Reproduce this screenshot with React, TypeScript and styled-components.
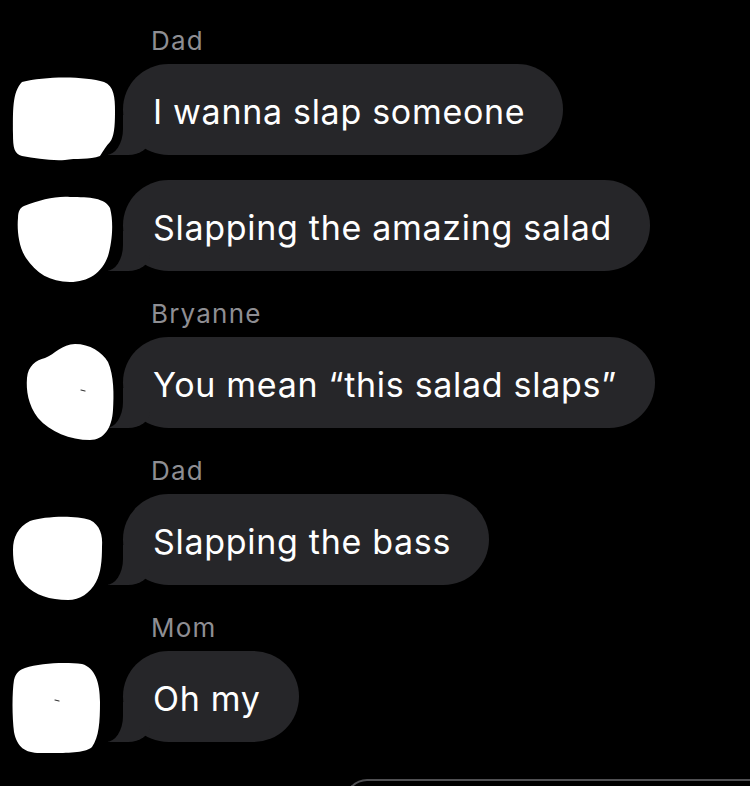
import React from "react";
import styled, { createGlobalStyle } from "styled-components";

const GlobalStyle = createGlobalStyle`
  html, body {
    margin: 0;
    padding: 0;
    background: #000;
    overflow: hidden;
  }
  body {
    font-family: Inter, "Noto Sans", "Liberation Sans", sans-serif;
  }
`;

const BUBBLE = "#262629";

const Screen = styled.div`
  width: 750px;
  height: 786px;
  overflow: hidden;
  background: #000;
  padding-top: 26px;
  box-sizing: border-box;
`;

const Thread = styled.div`
  display: flex;
  flex-direction: column;
  gap: 28px;
`;

const Group = styled.section`
  display: flex;
  flex-direction: column;
`;

const Sender = styled.div`
  margin-left: 151px;
  margin-bottom: 8px;
  font-size: 26px;
  line-height: 30px;
  letter-spacing: 1.2px;
  color: #8e8e93;
`;

const Rows = styled.div`
  display: flex;
  flex-direction: column;
  gap: 25px;
`;

const Row = styled.div`
  display: flex;
  align-items: flex-end;
`;

const Avatar = styled.svg`
  flex: 0 0 123px;
  width: 123px;
  height: 118px;
  margin-top: -9px;
  margin-bottom: -18px;
  position: relative;
  z-index: 2;
`;

const Bubble = styled.div`
  position: relative;
  display: flex;
  align-items: center;
  height: 91px;
  padding: 3px 38px 0 30px;
  box-sizing: border-box;
  border-radius: 45.5px;
  background: ${BUBBLE};
  color: #fff;
  font-size: 34px;
  letter-spacing: 0.7px;
  white-space: nowrap;

  &::before {
    content: "";
    position: absolute;
    z-index: 0;
    left: -15px;
    bottom: 0;
    width: 42px;
    height: 40px;
    background: ${BUBBLE};
    border-bottom-right-radius: 22px 16px;
  }

  &::after {
    content: "";
    position: absolute;
    z-index: 1;
    left: -17px;
    bottom: 0;
    width: 17px;
    height: 40px;
    background: #000;
    border-bottom-right-radius: 17px 26px;
  }
`;

const Composer = styled.div`
  margin: 37px 0 0 345px;
  height: 44px;
  border: 2px solid #4f4f52;
  border-right: none;
  border-radius: 22px 0 0 22px;
`;

type Msg = { text: string; blob: string; speck?: [number, number] };
type Chat = { sender: string; messages: Msg[] };

const chats: Chat[] = [
  {
    sender: "Dad",
    messages: [
      {
        text: "I wanna slap someone",
        blob: "M 22 27 C 45 21, 85 21, 104 27 C 114 31, 115 42, 115 57 C 115 72, 114 82, 110 87 C 106 91, 104 95, 100 101 C 90 105, 75 103, 65 105 C 50 106, 35 103, 22 101 C 14 99, 13 92, 13 79 C 13 57, 12 37, 22 27 Z",
      },
      {
        text: "Slapping the amazing salad",
        blob: "M 24 35 C 40 29, 55 25, 70 26 C 90 26, 105 27, 110 37 C 114 52, 112 72, 108 85 C 102 102, 88 111, 70 111 C 50 111, 36 102, 26 87 C 18 75, 17 57, 18 47 C 18 40, 20 37, 24 35 Z",
      },
    ],
  },
  {
    sender: "Bryanne",
    messages: [
      {
        text: "You mean \u201Cthis salad slaps\u201D",
        blob: "M 75 16 C 90 16, 102 24, 108 34 C 114 47, 114 67, 113 82 C 112 100, 104 112, 90 112 C 70 112, 50 104, 38 90 C 28 77, 26 62, 27 50 C 28 38, 36 32, 45 30 C 55 26, 62 16, 75 16 Z",
        speck: [83, 62],
      },
    ],
  },
  {
    sender: "Dad",
    messages: [
      {
        text: "Slapping the bass",
        blob: "M 30 36 C 45 31, 75 30, 90 35 C 100 40, 103 50, 102 62 C 102 75, 101 88, 96 97 C 90 108, 80 115, 68 115 C 50 115, 35 110, 25 100 C 15 90, 13 78, 13 65 C 13 52, 18 42, 30 36 Z",
      },
    ],
  },
  {
    sender: "Mom",
    messages: [
      {
        text: "Oh my",
        blob: "M 25 26 C 40 21, 65 20, 82 22 C 95 26, 100 40, 100 60 C 100 80, 99 95, 92 105 C 85 112, 60 111, 40 111 C 25 111, 17 105, 14 90 C 12 75, 12 50, 14 38 C 16 30, 20 28, 25 26 Z",
        speck: [57, 58],
      },
    ],
  },
];

const Blob = ({ d, speck }: { d: string; speck?: [number, number] }) => (
  <Avatar viewBox="0 0 123 118">
    <path d={d} fill="#fff" />
    {speck && (
      <line
        x1={speck[0] - 2}
        y1={speck[1]}
        x2={speck[0] + 2}
        y2={speck[1] + 1}
        stroke="#333"
        strokeWidth="1.2"
        strokeLinecap="round"
      />
    )}
  </Avatar>
);

export default function App() {
  return (
    <Screen>
      <GlobalStyle />
      <Thread>
        {chats.map((chat, i) => (
          <Group key={i}>
            <Sender>{chat.sender}</Sender>
            <Rows>
              {chat.messages.map((m, j) => (
                <Row key={j}>
                  <Blob d={m.blob} speck={m.speck} />
                  <Bubble>{m.text}</Bubble>
                </Row>
              ))}
            </Rows>
          </Group>
        ))}
      </Thread>
      <Composer />
    </Screen>
  );
}
